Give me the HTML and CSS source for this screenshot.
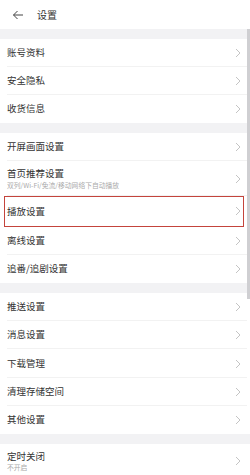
FILE: index.html
```html
<!DOCTYPE html>
<html lang="zh">
<head>
<meta charset="utf-8">
<link rel="stylesheet" href="styles.css">
</head>
<body>
<div class="page">
  <header class="topbar">
    <svg class="back" viewBox="0 0 12 10" width="12" height="10"><path d="M11 5H1.5M5.5 1L1.5 5l4 4" fill="none" stroke="#444" stroke-width="1"/></svg>
    <span class="title">设置</span>
  </header>
  <div class="gap"></div>
  <div class="group">
    <div class="row"><span class="label">账号资料</span><svg class="chev" viewBox="0 0 6 10"><path d="M1 1l4 4-4 4"/></svg></div>
    <div class="row"><span class="label">安全隐私</span><svg class="chev" viewBox="0 0 6 10"><path d="M1 1l4 4-4 4"/></svg></div>
    <div class="row last"><span class="label">收货信息</span><svg class="chev" viewBox="0 0 6 10"><path d="M1 1l4 4-4 4"/></svg></div>
  </div>
  <div class="gap"></div>
  <div class="group">
    <div class="row"><span class="label">开屏画面设置</span><svg class="chev" viewBox="0 0 6 10"><path d="M1 1l4 4-4 4"/></svg></div>
    <div class="row tall"><div class="texts"><span class="label">首页推荐设置</span><span class="sub">双列/Wi-Fi/免流/移动网络下自动播放</span></div><svg class="chev" viewBox="0 0 6 10"><path d="M1 1l4 4-4 4"/></svg></div>
    <div class="row hl"><span class="label">播放设置</span><svg class="chev" viewBox="0 0 6 10"><path d="M1 1l4 4-4 4"/></svg></div>
    <div class="row"><span class="label">离线设置</span><svg class="chev" viewBox="0 0 6 10"><path d="M1 1l4 4-4 4"/></svg></div>
    <div class="row last"><span class="label">追番/追剧设置</span><svg class="chev" viewBox="0 0 6 10"><path d="M1 1l4 4-4 4"/></svg></div>
  </div>
  <div class="gap"></div>
  <div class="group">
    <div class="row"><span class="label">推送设置</span><svg class="chev" viewBox="0 0 6 10"><path d="M1 1l4 4-4 4"/></svg></div>
    <div class="row"><span class="label">消息设置</span><svg class="chev" viewBox="0 0 6 10"><path d="M1 1l4 4-4 4"/></svg></div>
    <div class="row"><span class="label">下载管理</span><svg class="chev" viewBox="0 0 6 10"><path d="M1 1l4 4-4 4"/></svg></div>
    <div class="row"><span class="label">清理存储空间</span><svg class="chev" viewBox="0 0 6 10"><path d="M1 1l4 4-4 4"/></svg></div>
    <div class="row last"><span class="label">其他设置</span><svg class="chev" viewBox="0 0 6 10"><path d="M1 1l4 4-4 4"/></svg></div>
  </div>
  <div class="gap"></div>
  <div class="group">
    <div class="row tall last"><div class="texts"><span class="label">定时关闭</span><span class="sub">不开启</span></div><svg class="chev" viewBox="0 0 6 10"><path d="M1 1l4 4-4 4"/></svg></div>
  </div>
  <div class="scrollbar"></div>
</div>
</body>
</html>
```
FILE: styles.css
```css
* { box-sizing: border-box; }
html, body { margin: 0; padding: 0; background: #fff; }
body { font-family: "Noto Sans CJK SC", "Noto Sans", sans-serif; color: #333; }
.page { position: relative; width: 250px; height: 475px; overflow: hidden; }
.topbar { height: 29px; display: flex; align-items: center; padding-left: 12px; gap: 13px; }
.back { display: block; }
.title { font-size: 10px; color: #333; line-height: 1; }
.gap { height: 9.5px; background: #f2f2f4; }
.group { background: #fff; }
.row { position: relative; height: 28.3px; display: flex; align-items: center; justify-content: space-between; padding: 0 9px 0 7px; }
.row::after { content: ""; position: absolute; left: 7px; right: 3px; bottom: 0; height: 1px; background: #f2f2f2; }
.row.last::after { display: none; }
.row.tall { height: 35px; }
.row.hl { border: 1px solid #c4443c; margin: 0 6px 0 4px; padding: 0 2px 0 2px; height: 30.5px; }
.row.hl::after { display: none; }
.label { font-size: 9.5px; line-height: 1; color: #333; }
.texts { display: flex; flex-direction: column; gap: 3px; }
.sub { font-size: 6.8px; line-height: 1; color: #aaa; white-space: nowrap; }
.chev { width: 6px; height: 10px; fill: none; stroke: #b5b5b5; stroke-width: 0.8; }
.scrollbar { position: absolute; right: 0; top: 29px; width: 3px; height: 270px; background: #cfcfd2; }
```
